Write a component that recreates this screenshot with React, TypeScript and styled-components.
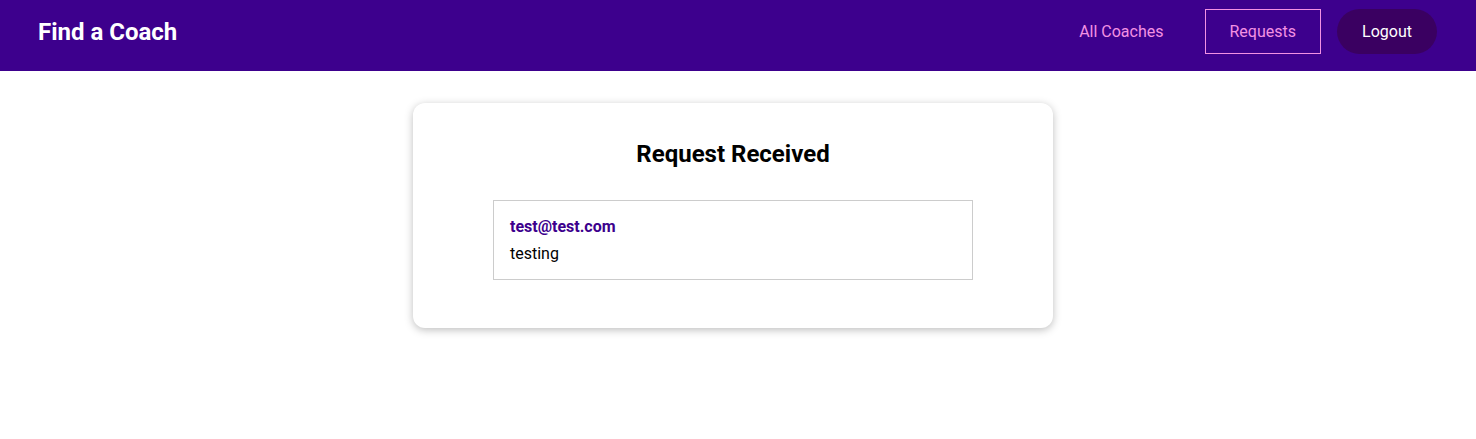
import React from "react";
import styled, { createGlobalStyle } from "styled-components";

const GlobalStyle = createGlobalStyle`
  * {
    box-sizing: border-box;
  }
  html, body {
    margin: 0;
    padding: 0;
    background: #fff;
    font-family: Roboto, "Liberation Sans", sans-serif;
  }
`;

const Header = styled.header`
  width: 100%;
  height: 71px;
  background-color: #3d008d;
  display: flex;
  align-items: flex-start;
  justify-content: space-between;
  padding: 9px 39px 0 38px;
`;

const Title = styled.h1`
  margin: 0;
  height: 45px;
  display: flex;
  align-items: center;
  font-size: 24px;
  font-weight: 700;
  color: #fff;
`;

const NavList = styled.ul`
  list-style: none;
  margin: 0;
  padding: 0;
  display: flex;
  align-items: center;
  gap: 16px;
`;

const NavLink = styled.a<{ $active?: boolean }>`
  display: inline-block;
  text-decoration: none;
  color: #f391e3;
  font-size: 16px;
  line-height: 19px;
  padding: 12px 24px;
  border: 1px solid ${(p) => (p.$active ? "#f391e3" : "transparent")};
  cursor: pointer;
`;

const LogoutButton = styled.button`
  font-family: inherit;
  font-size: 16px;
  line-height: 19px;
  width: 100px;
  padding: 13px 0;
  border: none;
  border-radius: 30px;
  background-color: #3a0061;
  color: #fff;
  cursor: pointer;
`;

const Main = styled.main`
  padding: 32px 10px 32px 0;
`;

const Card = styled.section`
  max-width: 640px;
  margin: 0 auto;
  padding: 16px;
  border-radius: 12px;
  background: #fff;
  box-shadow: 0 2px 8px rgba(0, 0, 0, 0.26);
`;

const Heading = styled.h2`
  margin: 21px 0 0;
  text-align: center;
  font-size: 24px;
  line-height: 28px;
  font-weight: 700;
  color: #000;
`;

const RequestList = styled.ul`
  list-style: none;
  max-width: 480px;
  margin: 32px auto;
  padding: 0;
`;

const RequestItem = styled.li`
  border: 1px solid #ccc;
  padding: 16px;
`;

const Email = styled.div`
  font-size: 16px;
  line-height: 19px;
  font-weight: 700;
  color: #3d008d;
`;

const Message = styled.p`
  margin: 8px 0 0;
  font-size: 16px;
  line-height: 19px;
  color: #000;
`;

const requests = [{ id: "r1", email: "test@test.com", message: "testing" }];

const App: React.FC = () => {
  return (
    <>
      <GlobalStyle />
      <Header>
        <Title>Find a Coach</Title>
        <NavList>
          <li>
            <NavLink>All Coaches</NavLink>
          </li>
          <li>
            <NavLink $active>Requests</NavLink>
          </li>
          <li>
            <LogoutButton>Logout</LogoutButton>
          </li>
        </NavList>
      </Header>
      <Main>
        <Card>
          <Heading>Request Received</Heading>
          <RequestList>
            {requests.map((req) => (
              <RequestItem key={req.id}>
                <Email>{req.email}</Email>
                <Message>{req.message}</Message>
              </RequestItem>
            ))}
          </RequestList>
        </Card>
      </Main>
    </>
  );
};

export default App;
